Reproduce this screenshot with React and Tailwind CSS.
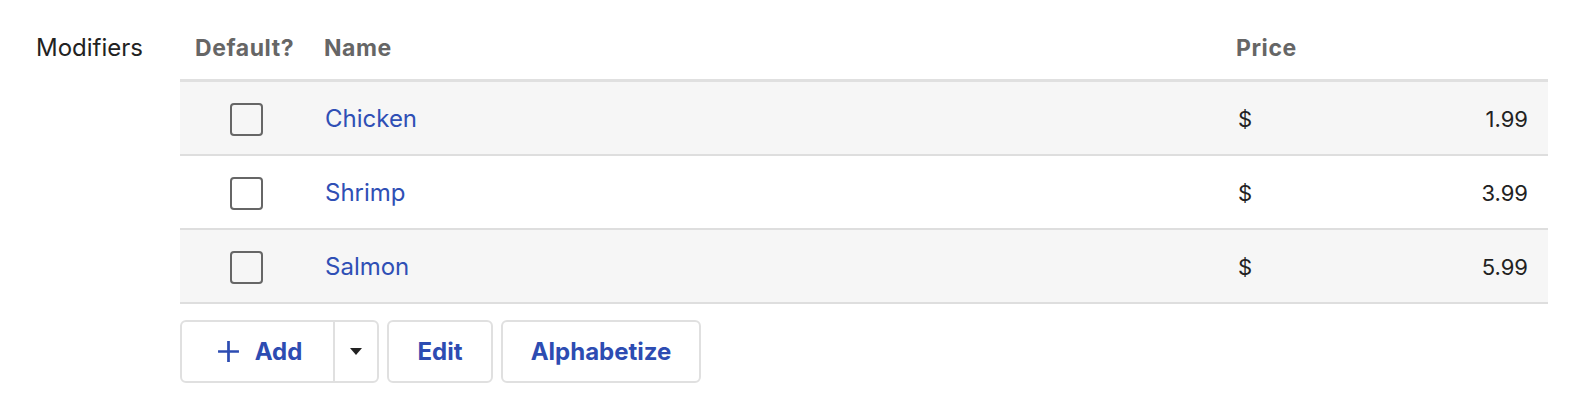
import React from 'react';

const rows = [
  { name: 'Chicken', price: '1.99', shaded: true },
  { name: 'Shrimp', price: '3.99', shaded: false },
  { name: 'Salmon', price: '5.99', shaded: true },
];

const font = { fontFamily: 'Inter, "Noto Sans", sans-serif' };

export default function App() {
  return (
    <div className="w-full h-[402px] bg-white text-[#222]" style={font}>
      <div className="flex pl-[36px] pt-[30px]">
        {/* Label */}
        <div className="w-[144px] h-[36px] flex items-center text-[24px]">Modifiers</div>

        <div className="w-[1368px]">
          {/* Header */}
          <div className="grid grid-cols-[132px_1fr_324px] h-[36px] items-center text-[23px] font-bold tracking-[0.025em] text-[#666] mb-[13px]">
            <div className="pl-[15px]">Default?</div>
            <div className="pl-[12px]">Name</div>
            <div className="pl-[12px]">Price</div>
          </div>

          {/* Rows */}
          <div className="border-t-[3px] border-[#e0e0e0]">
            {rows.map((r) => (
              <div
                key={r.name}
                className={`grid grid-cols-[132px_1fr_324px] h-[74px] items-center border-b-2 border-[#dedede] ${r.shaded ? 'bg-[#f6f6f6]' : 'bg-white'}`}
              >
                <div className="flex justify-center pt-[2px]">
                  <div className="w-[33px] h-[33px] rounded-[4px] border-2 border-[#666]" />
                </div>
                <div className="pl-[13px] pt-[2px] text-[24px] text-[#2f4fb5]">{r.name}</div>
                <div className="flex justify-between pl-[14px] pr-[20px] pt-[2px] text-[22px]">
                  <span>$</span>
                  <span>{r.price}</span>
                </div>
              </div>
            ))}
          </div>

          {/* Actions */}
          <div className="flex gap-2 mt-[16px] text-[24px] font-bold text-[#2d4cb2]">
            <div className="flex h-[63px] rounded-[6px] border-2 border-[#e0e0e0]">
              <button className="w-[151px] pl-[4px] flex items-center justify-center gap-[15px]">
                <svg width="23" height="23" viewBox="0 0 22 22" fill="none" stroke="currentColor" strokeWidth="2.6">
                  <path d="M11 1v20M1 11h20" />
                </svg>
                <span>Add</span>
              </button>
              <div className="w-[2px] bg-[#e0e0e0]" />
              <button className="w-[42px] flex items-center justify-center">
                <svg width="12" height="7" viewBox="0 0 12 7">
                  <path d="M0 0h12L6 7z" fill="#222" />
                </svg>
              </button>
            </div>
            <button className="w-[106px] h-[63px] rounded-[6px] border-2 border-[#e0e0e0]">Edit</button>
            <button className="w-[200px] h-[63px] rounded-[6px] border-2 border-[#e0e0e0]">Alphabetize</button>
          </div>
        </div>
      </div>
    </div>
  );
}
